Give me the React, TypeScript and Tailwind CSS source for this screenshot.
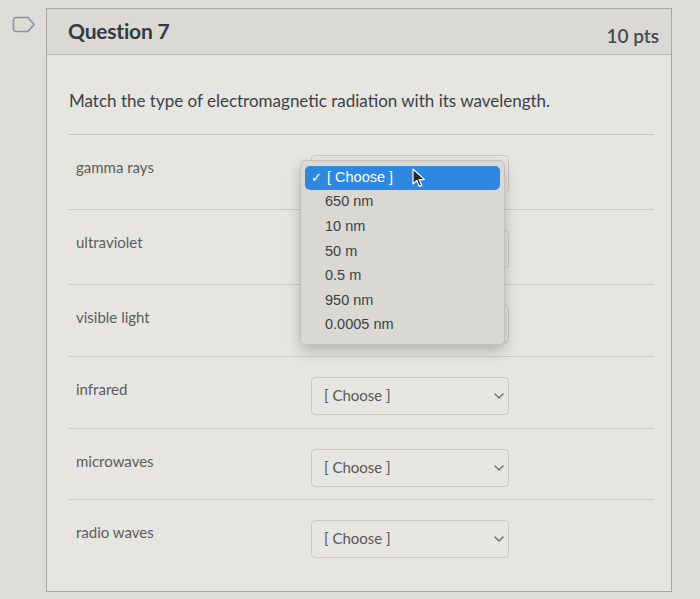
const rows = [
  { label: 'gamma rays', h: 'h-[75px]' },
  { label: 'ultraviolet', h: 'h-[75px]' },
  { label: 'visible light', h: 'h-[72px]' },
  { label: 'infrared', h: 'h-[72px]' },
  { label: 'microwaves', h: 'h-[71px]' },
  { label: 'radio waves', h: 'h-[72px]' },
]

const options = ['650 nm', '10 nm', '50 m', '0.5 m', '950 nm', '0.0005 nm']

function Chevron() {
  return (
    <svg width="10" height="6" viewBox="0 0 10 6" fill="none" stroke="#6b6b6b" strokeWidth="1.4" strokeLinecap="round" strokeLinejoin="round">
      <path d="M1 1l4 4 4-4" />
    </svg>
  )
}

function ChooseSelect() {
  return (
    <div className="flex h-[38px] w-[198px] items-center justify-between rounded-[4px] border border-[#c9c8c2] bg-[#e7e6e1] pl-[12px] pr-[4px] text-[15px] text-[#55585b]">
      <span>[ Choose ]</span>
      <Chevron />
    </div>
  )
}

export default function App() {
  return (
    <div className="relative h-[599px] w-[700px] overflow-hidden bg-[#dddcd6] font-['Lato','Liberation_Sans',sans-serif]">
      {/* flag marker */}
      <svg className="absolute left-[12px] top-[16px]" width="24" height="17" viewBox="0 0 24 17" fill="none">
        <path d="M4 1.5h12l6 7-6 7H4a2.5 2.5 0 0 1-2.5-2.5V4A2.5 2.5 0 0 1 4 1.5z" stroke="#8494ab" strokeWidth="1.7" strokeLinejoin="round" />
      </svg>

      <div className="ml-[46px] mt-[8px] h-[584px] w-[626px] border border-[#a8a7a1] bg-[#e6e5e0]">
        <div className="flex h-[46px] items-start justify-between border-b border-[#b3b2ac] bg-[#dad9d3] pl-[21px] pr-[12px]">
          <h2 className="mt-[6px] text-[21px] font-bold tracking-[-0.2px] text-[#333a46]">Question 7</h2>
          <span className="mt-[13px] text-[19px] font-semibold text-[#454a52]">10 pts</span>
        </div>

        <div className="pl-[22px] pr-[17px] pt-[33px]">
          <p className="text-[17px] text-[#3c4148]">Match the type of electromagnetic radiation with its wavelength.</p>
          <div className="mt-[20px] border-t border-[#c3c2bc]">
            {rows.map((r, i) => (
              <div key={r.label} className={`relative flex ${r.h} ${i < rows.length - 1 ? 'border-b border-[#c9c8c2]' : ''}`}>
                <div className="w-[242px] pl-[7px] pt-[21px] text-[15px] text-[#5a5d61]">{r.label}</div>
                <div className="pt-[20px]">
                  <ChooseSelect />
                </div>
              </div>
            ))}
          </div>
        </div>
      </div>

      {/* open dropdown list */}
      <div className="absolute left-[300px] top-[160px] w-[205px] rounded-[6px] border border-[#c2c1bb] bg-[#d9d8d2] px-[4px] pb-[6px] pt-[5px] font-['Liberation_Sans',sans-serif] text-[14.5px] text-[#3e3f41] shadow-[0_6px_14px_rgba(0,0,0,0.22)]">
        <div className="flex h-[24px] items-center rounded-[5px] bg-[#2e87e0] pl-[6px] text-white">
          <span className="mr-[5px] text-[13px]">✓</span>
          <span>[ Choose ]</span>
        </div>
        {options.map((o) => (
          <div key={o} className="flex h-[24.6px] items-center pl-[20px]">
            {o}
          </div>
        ))}
      </div>

      {/* mouse cursor */}
      <svg className="absolute left-[412px] top-[168px]" width="14" height="20" viewBox="0 0 14 20">
        <path d="M1 1v15l3.8-3.6 2.6 6 2.4-1-2.6-5.8H12.5z" fill="#2a2a2a" stroke="#fff" strokeWidth="1.2" strokeLinejoin="round" />
      </svg>
    </div>
  )
}
